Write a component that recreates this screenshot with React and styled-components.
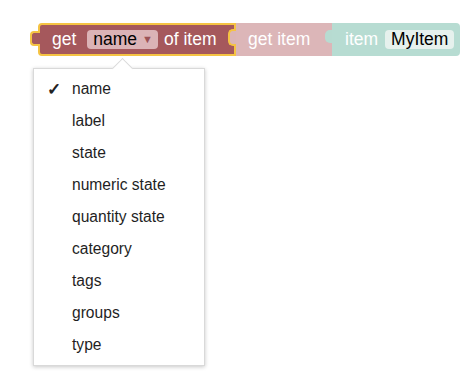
import React from "react";
import styled, { createGlobalStyle } from "styled-components";

const Global = createGlobalStyle`
  html, body { margin: 0; padding: 0; background: #fff; }
  body { font-family: "Liberation Sans", Arial, sans-serif; }
`;

const Page = styled.div`
  position: relative;
  width: 474px;
  height: 379px;
  overflow: hidden;
`;

const Row = styled.div`
  display: flex;
  align-items: flex-start;
  padding: 23px 0 0 30px;
`;

const Block = styled.div`
  position: relative;
  box-sizing: border-box;
  height: 33px;
  display: flex;
  align-items: center;
  gap: ${(p) => p.$gap || 8}px;
  padding: 0 ${(p) => p.$pr || 10}px 0 ${(p) => p.$pl || 12}px;
  margin-left: ${(p) => p.$ml || 0}px;
  width: ${(p) => p.$w}px;
  background: ${(p) => p.$bg};
  color: ${(p) => p.$fg || "#fff"};
  font-size: 17.5px;
  border-radius: ${(p) => p.$radius || "0"};
  ${(p) => (p.$selected ? "border: 2.5px solid #f5c343;" : "")}
`;

const LeftTab = styled.span`
  position: absolute;
  left: -8px;
  top: 8px;
  width: 8px;
  height: 11px;
  background: ${(p) => p.$bg};
  border-radius: 4px 0 0 4px;
  ${(p) => (p.$selected ? "border: 2.5px solid #f5c343; border-right: none; left: -10px; top: 6px;" : "")}
`;

const RightSocket = styled.span`
  position: absolute;
  right: ${(p) => (p.$selected ? -2.5 : 0)}px;
  top: ${(p) => (p.$selected ? 4 : 7)}px;
  width: 7px;
  height: 13px;
  background: ${(p) => p.$bg};
  border-radius: 5px 0 0 5px;
  ${(p) => (p.$selected ? "border: 2.5px solid #f5c343; border-right: none;" : "")}
`;

const Label = styled.span`
  white-space: nowrap;
  color: ${(p) => p.$color || "#fff"};
  line-height: 1;
  margin-right: ${(p) => p.$mr || 0}px;
`;

const Chip = styled.span`
  display: inline-flex;
  align-items: center;
  gap: 5px;
  height: 19px;
  padding: 0 ${(p) => p.$pr || 6}px 0 6px;
  border-radius: 4px;
  background: ${(p) => p.$bg};
  color: #000;
  white-space: nowrap;
  line-height: 1;
`;

const Arrow = styled.span`
  font-size: 11px;
  color: #9c5256;
`;

const Menu = styled.div`
  position: absolute;
  left: 33px;
  top: 68px;
  width: 172px;
  height: 298px;
  box-sizing: border-box;
  background: #fff;
  border: 1px solid #d9d9d9;
  box-shadow: 0 1px 4px rgba(0, 0, 0, 0.22);
  padding-top: 4px;
  font-size: 15.6px;
  color: #1f1f1f;
`;

const Pointer = styled.span`
  position: absolute;
  left: 81px;
  top: -8px;
  width: 14px;
  height: 14px;
  background: #fff;
  border-left: 1px solid #d9d9d9;
  border-top: 1px solid #d9d9d9;
  transform: rotate(45deg);
`;

const Item = styled.div`
  display: flex;
  align-items: center;
  height: 32px;
`;

const Check = styled.span`
  width: 38px;
  padding-left: 13px;
  box-sizing: border-box;
  font-size: 17px;
  font-weight: bold;
  color: #222;
`;

const items = [
  "name",
  "label",
  "state",
  "numeric state",
  "quantity state",
  "category",
  "tags",
  "groups",
  "type",
];

export default function App() {
  return (
    <Page>
      <Global />
      <Row>
        <Block $selected $bg="#a5585c" $w={198} $ml={8} $pl={12} $gap={6} $radius="4px 0 0 4px">
          <LeftTab $selected $bg="#a5585c" />
          <Label $mr={5}>get</Label>
          <Chip $bg="#dbb3b6" $pr={5}>
            name<Arrow>▼</Arrow>
          </Chip>
          <Label>of item</Label>
          <RightSocket $selected $bg="#dbb5b7" />
        </Block>
        <Block $bg="#dcb6b8" $w={96} $pl={12}>
          <Label>get item</Label>
          <RightSocket $bg="#b7dbd1" />
        </Block>
        <Block $bg="#b7dcd2" $w={128} $pl={13} $gap={7} $radius="0 4px 4px 0">
          <Label>item</Label>
          <Chip $bg="#e6f1ed">MyItem</Chip>
        </Block>
      </Row>
      <Menu>
        <Pointer />
        {items.map((it, i) => (
          <Item key={it}>
            <Check>{i === 0 ? "✓" : ""}</Check>
            {it}
          </Item>
        ))}
      </Menu>
    </Page>
  );
}
